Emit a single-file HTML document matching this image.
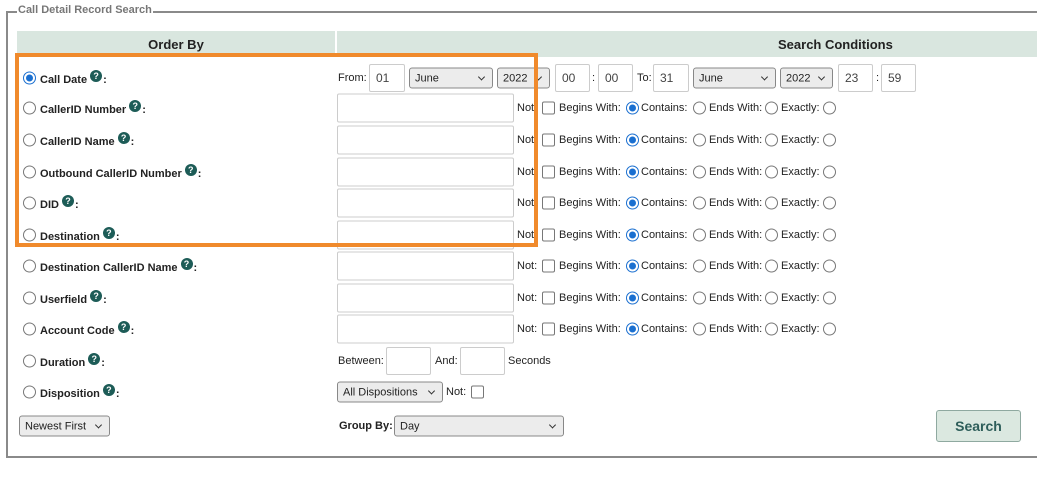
<!DOCTYPE html><html><head><style>
*{box-sizing:border-box}
body{margin:0;width:1037px;height:481px;background:#fff;font-family:"Liberation Sans",sans-serif;font-size:11px;color:#222;position:relative;overflow:hidden}
.a{position:absolute}
.fs{left:6px;top:11px;width:1040px;height:447px;border:2px solid #8a8a8a;border-right:none}
.lg{left:17px;top:4px;background:#fff;color:#777;font-weight:bold;font-size:11px;padding:0 1px}
.hd{top:31px;height:26px;background:#d9e6df;font-weight:bold;font-size:13px;text-align:center;line-height:28px}
.row{position:absolute;left:0;width:1037px;height:30px}
.row>*{position:absolute;top:50%;transform:translateY(-50%)}
.r{width:13px;height:13px;border:1px solid #777;border-radius:50%;background:#fff}
.r.on{border:1px solid #1a6fd0}
.r.on:after{content:"";position:absolute;left:2px;top:2px;width:7px;height:7px;border-radius:50%;background:#1a6fd0}
.lb{font-weight:bold;white-space:nowrap}
.q{display:inline-block;width:12px;height:12px;border-radius:50%;background:#1d5c57;color:#fff;font-size:9px;line-height:12px;text-align:center;vertical-align:4px;margin:0 1px 0 3px}
.in{height:29px;border:1px solid #ccc;border-radius:2px;background:#fff;color:#444;padding:0 6px;line-height:27px;font-size:12px}
.sel{height:21px;border:1px solid #888;border-radius:3px;background:#ececec;padding:0 5px;font-size:11px;display:flex;align-items:center;color:#222}
.sel:after{content:"";position:absolute;right:8px;top:6px;width:4px;height:4px;border-right:1px solid #333;border-bottom:1px solid #333;transform:rotate(45deg)}
.cb{width:13px;height:13px;border:1px solid #777;border-radius:2px;background:#fff}
.t{white-space:nowrap}
</style></head><body>
<div class="a fs"></div>
<div class="a lg">Call Detail Record Search</div>
<div class="a hd" style="left:17px;width:318px">Order By</div>
<div class="a hd" style="left:337px;width:700px;text-align:left"><span style="position:absolute;left:441px">Search Conditions</span></div>

<div class="row" style="top:63px">
<span class="r on" style="left:23px"></span><span class="lb" style="left:40px">Call Date<span class="q">?</span>:</span>
<span class="t" style="left:338px">From:</span>
<span class="in" style="left:369px;width:36px;height:28px">01</span>
<span class="sel" style="left:409px;width:84px">June</span>
<span class="sel" style="left:497px;width:53px">2022</span>
<span class="in" style="left:555px;width:35px;height:28px">00</span>
<span class="t" style="left:592px">:</span>
<span class="in" style="left:598px;width:35px;height:28px">00</span>
<span class="t" style="left:637px">To:</span>
<span class="in" style="left:653px;width:36px;height:28px">31</span>
<span class="sel" style="left:693px;width:83px">June</span>
<span class="sel" style="left:780px;width:53px">2022</span>
<span class="in" style="left:838px;width:35px;height:28px">23</span>
<span class="t" style="left:876px">:</span>
<span class="in" style="left:881px;width:35px;height:28px">59</span>
</div>

<div class="row" style="top:93px"><span class="r" style="left:23px"></span><span class="lb" style="left:40px">CallerID Number<span class="q">?</span>:</span>
<span class="in" style="left:337px;width:177px"></span><span class="t" style="left:517px">Not:</span><span class="cb" style="left:542px"></span><span class="t" style="left:559px">Begins With:</span><span class="r on" style="left:626px"></span><span class="t" style="left:641px">Contains:</span><span class="r" style="left:693px"></span><span class="t" style="left:709px">Ends With:</span><span class="r" style="left:765px"></span><span class="t" style="left:781px">Exactly:</span><span class="r" style="left:823px"></span></div>

<div class="row" style="top:125px"><span class="r" style="left:23px"></span><span class="lb" style="left:40px">CallerID Name<span class="q">?</span>:</span>
<span class="in" style="left:337px;width:177px"></span><span class="t" style="left:517px">Not:</span><span class="cb" style="left:542px"></span><span class="t" style="left:559px">Begins With:</span><span class="r on" style="left:626px"></span><span class="t" style="left:641px">Contains:</span><span class="r" style="left:693px"></span><span class="t" style="left:709px">Ends With:</span><span class="r" style="left:765px"></span><span class="t" style="left:781px">Exactly:</span><span class="r" style="left:823px"></span></div>

<div class="row" style="top:157px"><span class="r" style="left:23px"></span><span class="lb" style="left:40px">Outbound CallerID Number<span class="q">?</span>:</span>
<span class="in" style="left:337px;width:177px"></span><span class="t" style="left:517px">Not:</span><span class="cb" style="left:542px"></span><span class="t" style="left:559px">Begins With:</span><span class="r on" style="left:626px"></span><span class="t" style="left:641px">Contains:</span><span class="r" style="left:693px"></span><span class="t" style="left:709px">Ends With:</span><span class="r" style="left:765px"></span><span class="t" style="left:781px">Exactly:</span><span class="r" style="left:823px"></span></div>

<div class="row" style="top:188px"><span class="r" style="left:23px"></span><span class="lb" style="left:40px">DID<span class="q">?</span>:</span>
<span class="in" style="left:337px;width:177px"></span><span class="t" style="left:517px">Not:</span><span class="cb" style="left:542px"></span><span class="t" style="left:559px">Begins With:</span><span class="r on" style="left:626px"></span><span class="t" style="left:641px">Contains:</span><span class="r" style="left:693px"></span><span class="t" style="left:709px">Ends With:</span><span class="r" style="left:765px"></span><span class="t" style="left:781px">Exactly:</span><span class="r" style="left:823px"></span></div>

<div class="row" style="top:220px"><span class="r" style="left:23px"></span><span class="lb" style="left:40px">Destination<span class="q">?</span>:</span>
<span class="in" style="left:337px;width:177px"></span><span class="t" style="left:517px">Not:</span><span class="cb" style="left:542px"></span><span class="t" style="left:559px">Begins With:</span><span class="r on" style="left:626px"></span><span class="t" style="left:641px">Contains:</span><span class="r" style="left:693px"></span><span class="t" style="left:709px">Ends With:</span><span class="r" style="left:765px"></span><span class="t" style="left:781px">Exactly:</span><span class="r" style="left:823px"></span></div>

<div class="row" style="top:251px"><span class="r" style="left:23px"></span><span class="lb" style="left:40px">Destination CallerID Name<span class="q">?</span>:</span>
<span class="in" style="left:337px;width:177px"></span><span class="t" style="left:517px">Not:</span><span class="cb" style="left:542px"></span><span class="t" style="left:559px">Begins With:</span><span class="r on" style="left:626px"></span><span class="t" style="left:641px">Contains:</span><span class="r" style="left:693px"></span><span class="t" style="left:709px">Ends With:</span><span class="r" style="left:765px"></span><span class="t" style="left:781px">Exactly:</span><span class="r" style="left:823px"></span></div>

<div class="row" style="top:283px"><span class="r" style="left:23px"></span><span class="lb" style="left:40px">Userfield<span class="q">?</span>:</span>
<span class="in" style="left:337px;width:177px"></span><span class="t" style="left:517px">Not:</span><span class="cb" style="left:542px"></span><span class="t" style="left:559px">Begins With:</span><span class="r on" style="left:626px"></span><span class="t" style="left:641px">Contains:</span><span class="r" style="left:693px"></span><span class="t" style="left:709px">Ends With:</span><span class="r" style="left:765px"></span><span class="t" style="left:781px">Exactly:</span><span class="r" style="left:823px"></span></div>

<div class="row" style="top:314px"><span class="r" style="left:23px"></span><span class="lb" style="left:40px">Account Code<span class="q">?</span>:</span>
<span class="in" style="left:337px;width:177px"></span><span class="t" style="left:517px">Not:</span><span class="cb" style="left:542px"></span><span class="t" style="left:559px">Begins With:</span><span class="r on" style="left:626px"></span><span class="t" style="left:641px">Contains:</span><span class="r" style="left:693px"></span><span class="t" style="left:709px">Ends With:</span><span class="r" style="left:765px"></span><span class="t" style="left:781px">Exactly:</span><span class="r" style="left:823px"></span></div>

<div class="row" style="top:346px"><span class="r" style="left:23px"></span><span class="lb" style="left:40px">Duration<span class="q">?</span>:</span>
<span class="t" style="left:338px">Between:</span><span class="in" style="left:386px;width:45px;height:28px"></span><span class="t" style="left:435px">And:</span><span class="in" style="left:460px;width:45px;height:28px"></span><span class="t" style="left:508px">Seconds</span></div>

<div class="row" style="top:377px"><span class="r" style="left:23px"></span><span class="lb" style="left:40px">Disposition<span class="q">?</span>:</span>
<span class="sel" style="left:337px;width:106px">All Dispositions</span><span class="t" style="left:446px">Not:</span><span class="cb" style="left:471px"></span></div>

<div class="row" style="top:411px"><span class="sel" style="left:19px;width:91px">Newest First</span>
<span class="lb" style="left:339px">Group By:</span><span class="sel" style="left:394px;width:170px">Day</span></div>

<div class="a" style="left:936px;top:410px;width:85px;height:32px;background:#dbe8e0;border:1px solid #8fa9a0;border-radius:3px;color:#2e5e5a;font-weight:bold;font-size:14px;text-align:center;line-height:30px">Search</div>

<div class="a" style="left:15px;top:53px;width:523px;height:194px;border:4px solid #f08a2c"></div>
</body></html>
